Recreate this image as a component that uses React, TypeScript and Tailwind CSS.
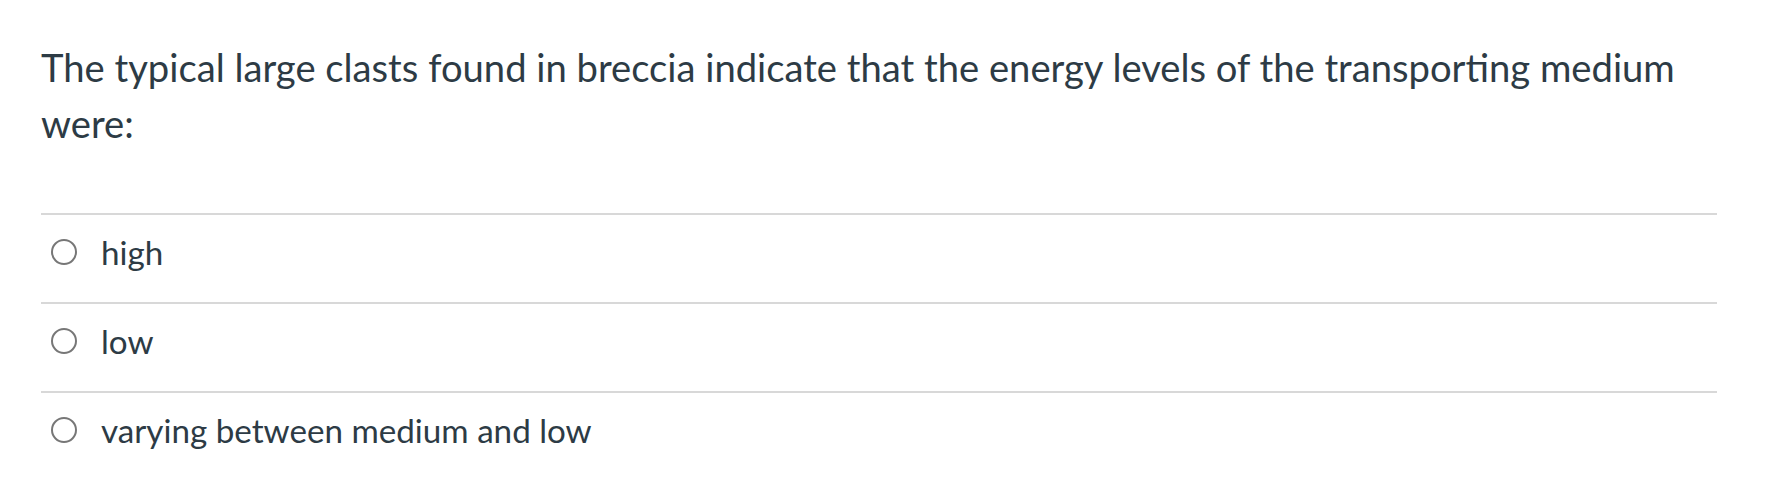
const answers = ["high", "low", "varying between medium and low"];

function Radio() {
    return <span className="block h-[26px] w-[26px] shrink-0 rounded-full border-[2.5px] border-[#777777] bg-white" />;
}

export default function App() {
    return (
        <div className="min-h-[491px] bg-white pl-[41px] pr-[48px] pt-[39px] text-[#2d3b45]" style={{ fontFamily: "Lato, 'Noto Sans', sans-serif" }}>
            <p className="text-[38.2px] leading-[56px]">
                The typical large clasts found in breccia indicate that the energy levels of the transporting medium were:
            </p>

            <div className="mt-[62px]">
                {answers.map((a) => (
                    <div key={a} className="flex h-[89px] items-start border-t-[2px] border-[#d8d8d8] pt-[12px]">
                        <div className="flex h-[50px] items-center">
                            <span className="ml-[10px] mr-[24px]"><Radio /></span>
                            <span className="text-[33.2px] leading-[50px]">{a}</span>
                        </div>
                    </div>
                ))}
            </div>
        </div>
    );
}
